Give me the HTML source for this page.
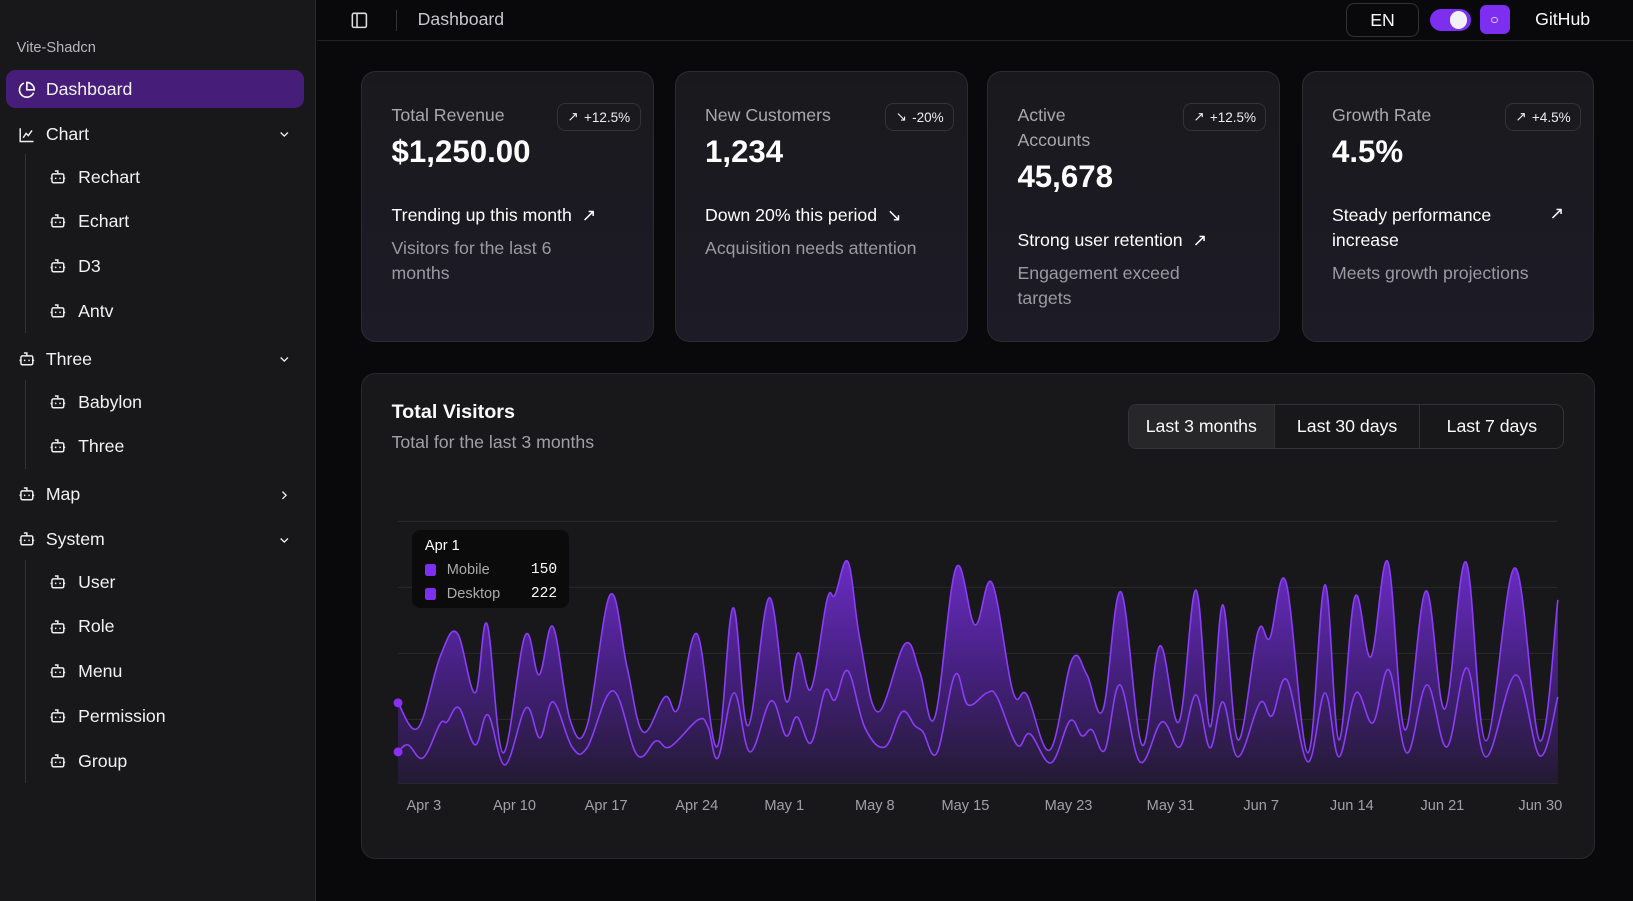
<!DOCTYPE html>
<html><head><meta charset="utf-8"><style>
html{zoom:1.04145}
*{box-sizing:border-box;margin:0;padding:0}
body{width:1568px;height:865px;background:#09090b;font-family:"Liberation Sans",sans-serif;color:#fafafa;position:relative;overflow:hidden}
.abs{position:absolute}
.side{left:0;top:0;width:303px;height:865px;background:#18181b;border-right:1px solid #2a2a2e}
.nav{position:absolute;left:0;font-size:17px;color:#f2f2f2;display:flex;align-items:center;height:20px}
.nav svg{position:absolute}
.vl{position:absolute;left:24px;width:1px;background:#333}
.hdr{left:304px;top:0;width:1264px;height:39px;border-bottom:1px solid #222}
.card{position:absolute;top:68px;width:281px;height:260px;border:1px solid #2b2b31;border-radius:14px;background:linear-gradient(180deg,#19191d 0%,#1d1b26 100%);padding:0 28px}
.ct{position:absolute;left:28px;top:30px;font-size:17px;color:#a8a8ad;line-height:24px}
.badge{position:absolute;top:30px;right:12px;height:27px;border:1px solid #333338;border-radius:8px;font-size:13px;display:flex;align-items:center;padding:0 9px;gap:5px;color:#eee}
.big{position:absolute;left:28px;font-size:30px;font-weight:bold;color:#fff}
.ft{position:absolute;left:28px;font-size:17px;color:#fff;line-height:24px}
.ds{position:absolute;left:28px;font-size:17px;color:#9a9aa0;line-height:24px}
.ax{position:absolute;top:766px;font-size:14px;color:#a0a0a6;transform:translateX(-50%)}
</style></head><body>
<div class="abs side">
  <div class="abs" style="left:16px;top:38px;font-size:14px;color:#b8b8bc">Vite-Shadcn</div>
  <div class="abs" style="left:6px;top:67px;width:286px;height:37px;background:#461d78;border-radius:9px"></div>
  <svg class="abs" style="left:17px;top:78px" width="17" height="17" viewBox="0 0 24 24" fill="none" stroke="#fff" stroke-width="2.2"><path d="M21.2 15.9A10 10 0 1 1 8 2.8"/><path d="M22 12A10 10 0 0 0 12 2v10z"/></svg>
  <div class="nav" style="left:44px;top:76px">Dashboard</div>
  <svg class="abs" style="left:17px;top:121px" width="17" height="17" viewBox="0 0 24 24" fill="none" stroke="#eee" stroke-width="2"><path d="M3 3v18h18"/><path d="M7 16l4-6 3 3 5-7"/></svg>
  <div class="nav" style="left:44px;top:119px">Chart</div>
  <div class="vl" style="top:148px;height:172px"></div>
  <div class="vl" style="top:365px;height:85px"></div>
  <div class="vl" style="top:538px;height:214px"></div>
  <div id="navs"></div>
</div>
<div class="abs hdr">
  <svg class="abs" style="left:32px;top:11px" width="18" height="18" viewBox="0 0 24 24" fill="none" stroke="#ddd" stroke-width="2"><rect x="3" y="3" width="18" height="18" rx="2"/><path d="M9 3v18"/></svg>
  <div class="abs" style="left:76px;top:10px;width:1px;height:20px;background:#333"></div>
  <div class="abs" style="left:97px;top:9px;font-size:17px;color:#c8c8cc">Dashboard</div>
  <div class="abs" style="left:988px;top:3px;width:71px;height:33px;border:1px solid #333;border-radius:8px;font-size:17px;display:flex;align-items:center;justify-content:center">EN</div>
  <div class="abs" style="left:1069px;top:9px;width:39px;height:21px;border-radius:11px;background:#7c2ff0"><div class="abs" style="right:3px;top:2px;width:17px;height:17px;border-radius:50%;background:#f3f0fa"></div></div>
  <div class="abs" style="left:1117px;top:5px;width:29px;height:28px;border-radius:6px;background:#7c2ff0"><div class="abs" style="left:11px;top:11px;width:6px;height:6px;border-radius:50%;border:1px solid #d9c4ff"></div></div>
  <div class="abs" style="left:1170px;top:9px;font-size:17px">GitHub</div>
</div>

<div class="card" style="left:347px">
  <div class="ct">Total Revenue</div><div class="badge"><span>↗</span>+12.5%</div>
  <div class="big" style="top:60px">$1,250.00</div>
  <div class="ft" style="top:126px">Trending up this month &nbsp;↗</div>
  <div class="ds" style="top:158px;width:200px">Visitors for the last 6 months</div>
</div>
<div class="card" style="left:648px">
  <div class="ct">New Customers</div><div class="badge"><span>↘</span>-20%</div>
  <div class="big" style="top:60px">1,234</div>
  <div class="ft" style="top:126px">Down 20% this period &nbsp;↘</div>
  <div class="ds" style="top:158px">Acquisition needs attention</div>
</div>
<div class="card" style="left:948px">
  <div class="ct">Active<br>Accounts</div><div class="badge"><span>↗</span>+12.5%</div>
  <div class="big" style="top:84px">45,678</div>
  <div class="ft" style="top:150px">Strong user retention &nbsp;↗</div>
  <div class="ds" style="top:182px;width:200px">Engagement exceed targets</div>
</div>
<div class="card" style="left:1250px">
  <div class="ct">Growth Rate</div><div class="badge"><span>↗</span>+4.5%</div>
  <div class="big" style="top:60px">4.5%</div>
  <div class="ft" style="top:126px;width:180px">Steady performance increase</div><div class="abs" style="right:28px;top:126px;font-size:17px">↗</div>
  <div class="ds" style="top:182px">Meets growth projections</div>
</div>

<div class="abs" style="left:347px;top:358px;width:1185px;height:467px;border:1px solid #2a2a2e;border-radius:14px;background:#18181b"></div>
<div class="abs" style="left:376px;top:385px;font-size:19px;font-weight:bold">Total Visitors</div>
<div class="abs" style="left:376px;top:415px;font-size:17px;color:#a0a0a6">Total for the last 3 months</div>
<div class="abs" style="left:1083px;top:388px;width:419px;height:43px;border:1px solid #333338;border-radius:8px;display:flex;font-size:17px;overflow:hidden">
  <div style="width:140px;background:#27272a;display:flex;align-items:center;justify-content:center;border-right:1px solid #333">Last 3 months</div>
  <div style="width:140px;display:flex;align-items:center;justify-content:center;border-right:1px solid #333">Last 30 days</div>
  <div style="flex:1;display:flex;align-items:center;justify-content:center">Last 7 days</div>
</div>

<svg class="abs" style="left:0;top:0" width="1568" height="865" viewBox="0 0 1633 901">
  <defs>
    <linearGradient id="g1" x1="0" x2="0" gradientUnits="userSpaceOnUse" y1="560" y2="783"><stop offset="0" stop-color="#6a2cc4"/><stop offset="0.5" stop-color="#45207e"/><stop offset="1" stop-color="#241a36"/></linearGradient>
    <linearGradient id="g2" x1="0" x2="0" gradientUnits="userSpaceOnUse" y1="660" y2="783"><stop offset="0" stop-color="#4b2186" stop-opacity="0.7"/><stop offset="1" stop-color="#221a30" stop-opacity="0.5"/></linearGradient>
  </defs>
  <g stroke="#2a2a2e" stroke-width="1">
    <line x1="398" y1="521.5" x2="1558" y2="521.5"/><line x1="398" y1="587.5" x2="1558" y2="587.5"/><line x1="398" y1="653.5" x2="1558" y2="653.5"/><line x1="398" y1="719.5" x2="1558" y2="719.5"/><line x1="398" y1="783.5" x2="1558" y2="783.5"/>
  </g>
  <path id="a1" fill="url(#g1)"/><path id="a2" fill="url(#g2)"/>
  <path id="l1" fill="none" stroke="#8b3cf7" stroke-width="1.6"/><path id="l2" fill="none" stroke="#8b3cf7" stroke-width="1.6"/>
  <circle cx="398" cy="703" r="4.5" fill="#8b2ff5"/><circle cx="398" cy="752" r="4.5" fill="#8b2ff5"/>
</svg>

<div class="abs" style="left:396px;top:509px;width:150px;height:75px;background:#0b0b0c;border-radius:8px;font-size:14px">
  <div class="abs" style="left:12px;top:8px;color:#fff">Apr 1</div>
  <div class="abs" style="left:12px;top:33px;width:11px;height:11px;background:#7c2ff0;border-radius:2px"></div>
  <div class="abs" style="left:33px;top:31px;color:#aaa">Mobile</div><div class="abs" style="right:11px;top:31px;font-family:'Liberation Mono',monospace">150</div>
  <div class="abs" style="left:12px;top:56px;width:11px;height:11px;background:#7c2ff0;border-radius:2px"></div>
  <div class="abs" style="left:33px;top:54px;color:#aaa">Desktop</div><div class="abs" style="right:11px;top:54px;font-family:'Liberation Mono',monospace">222</div>
</div>

<div class="ax" style="left:407px">Apr 3</div><div class="ax" style="left:494px">Apr 10</div><div class="ax" style="left:582px">Apr 17</div><div class="ax" style="left:669px">Apr 24</div><div class="ax" style="left:753px">May 1</div><div class="ax" style="left:840px">May 8</div><div class="ax" style="left:927px">May 15</div><div class="ax" style="left:1026px">May 23</div><div class="ax" style="left:1124px">May 31</div><div class="ax" style="left:1211px">Jun 7</div><div class="ax" style="left:1298px">Jun 14</div><div class="ax" style="left:1385px">Jun 21</div><div class="ax" style="left:1479px">Jun 30</div>

<script>
var bot='<svg width="17" height="17" viewBox="0 0 24 24" fill="none" stroke="#eee" stroke-width="2"><path d="M12 8V4H8"/><rect x="4" y="8" width="16" height="12" rx="2"/><path d="M2 14h2M20 14h2M15 13v2M9 13v2"/></svg>';
var chev='<svg width="14" height="14" viewBox="0 0 24 24" fill="none" stroke="#eee" stroke-width="2.2"><path d="M6 9l6 6 6-6"/></svg>';
var chevr='<svg width="14" height="14" viewBox="0 0 24 24" fill="none" stroke="#eee" stroke-width="2.2"><path d="M9 6l6 6-6 6"/></svg>';
var items=[["Rechart",170,1],["Echart",213,1],["D3",256,1],["Antv",299,1],["Three",345,0,chev],["Babylon",386,1],["Three",429,1],["Map",475,0,chevr],["System",518,0,chev],["User",559,1],["Role",602,1],["Menu",645,1],["Permission",688,1],["Group",731,1]];
var h='<div class="abs" style="left:266px;top:122px">'+chev+'</div>';
items.forEach(function(it){var ix=it[2]?47:17,tx=it[2]?75:44;
h+='<div class="abs" style="left:'+ix+'px;top:'+(it[1]-9)+'px">'+bot+'</div><div class="nav" style="left:'+tx+'px;top:'+(it[1]-10)+'px">'+it[0]+'</div>';
if(it[3])h+='<div class="abs" style="left:266px;top:'+(it[1]-7)+'px">'+it[3]+'</div>';});
document.getElementById('navs').innerHTML=h;
var U=[[398,703],[418,728],[440,657],[457,633],[475,693],[487,624],[503,753],[525,636],[539,675],[553,627],[570,720],[587,726],[610,595],[627,667],[643,732],[665,697],[678,709],[697,634],[717,747],[733,608],[748,726],[769,598],[786,701],[798,653],[811,689],[827,600],[835,595],[848,562],[860,640],[878,712],[905,644],[920,673],[935,717],[956,568],[975,625],[992,583],[1013,692],[1027,695],[1050,750],[1072,660],[1087,675],[1103,710],[1121,592],[1142,745],[1160,646],[1179,722],[1196,590],[1210,727],[1223,605],[1238,740],[1258,632],[1270,638],[1286,582],[1308,753],[1325,585],[1339,740],[1355,597],[1371,657],[1388,562],[1405,730],[1426,591],[1445,709],[1466,562],[1486,741],[1515,568],[1540,741],[1558,600]];
var L=[[398,752],[408,745],[423,758],[440,724],[447,722],[459,708],[475,745],[488,715],[505,765],[526,708],[540,738],[553,702],[572,747],[587,748],[613,691],[637,755],[656,741],[670,747],[698,720],[708,727],[718,758],[734,693],[750,752],[771,701],[786,736],[797,717],[811,743],[825,691],[835,700],[848,671],[865,728],[885,747],[902,712],[915,726],[923,732],[937,753],[955,675],[968,705],[987,693],[997,697],[1017,745],[1030,734],[1051,763],[1070,721],[1082,736],[1092,730],[1105,750],[1120,685],[1140,762],[1162,722],[1180,747],[1196,695],[1210,748],[1223,702],[1238,757],[1260,703],[1272,716],[1287,680],[1308,762],[1325,693],[1339,757],[1356,693],[1373,723],[1389,670],[1407,753],[1427,685],[1447,747],[1467,668],[1486,757],[1516,675],[1540,756],[1558,697]];
function sp(p){var d='M'+p[0][0]+','+p[0][1];for(var i=0;i<p.length-1;i++){var a=p[i-1]||p[i],b=p[i],c=p[i+1],e=p[i+2]||c;var t=0.18;
d+=' C'+(b[0]+(c[0]-a[0])*t).toFixed(1)+','+(b[1]+(c[1]-a[1])*t).toFixed(1)+' '+(c[0]-(e[0]-b[0])*t).toFixed(1)+','+(c[1]-(e[1]-b[1])*t).toFixed(1)+' '+c[0]+','+c[1];}return d;}
var u=sp(U),l=sp(L);
document.getElementById('l1').setAttribute('d',u);document.getElementById('l2').setAttribute('d',l);
document.getElementById('a1').setAttribute('d',u+' L1558,783 L398,783Z');document.getElementById('a2').setAttribute('d',l+' L1558,783 L398,783Z');
</script>
</body></html>
